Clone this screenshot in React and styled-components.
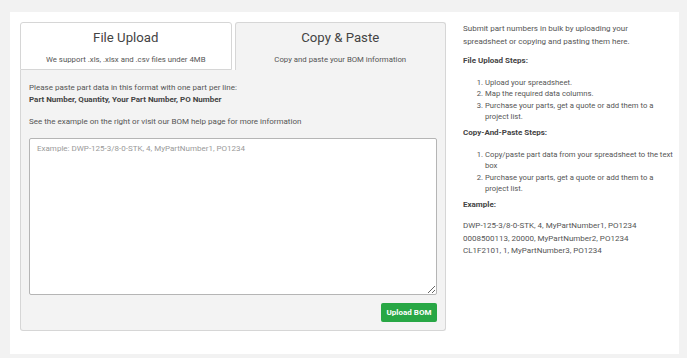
import React from "react";
import styled, { createGlobalStyle } from "styled-components";

const Global = createGlobalStyle`
  html, body { margin: 0; padding: 0; background: #f2f2f2; }
  body { font-family: Roboto, "Liberation Sans", sans-serif; color: #555; }
  * { box-sizing: border-box; }
`;

const Page = styled.div`
  padding: 12px 8px 4px 10px;
`;

const Card = styled.div`
  background: #fff;
  height: 342px;
  display: flex;
  gap: 17px;
  padding: 10px 6px 0 10px;
`;

const Left = styled.div`
  width: 426px;
  flex: none;
  display: flex;
  flex-direction: column;
`;

const Tabs = styled.div`
  display: flex;
  gap: 3px;
  height: 48px;
`;

const Tab = styled.div`
  flex: 1;
  text-align: center;
  border: 1px solid #d6d6d6;
  border-bottom: ${(p) => (p.$active ? "none" : "1px solid #d6d6d6")};
  border-radius: 3px 3px 0 0;
  background: ${(p) => (p.$active ? "#f3f3f3" : "#fff")};
  padding-top: 5px;
`;

const TabTitle = styled.div`
  font-size: 13.2px;
  color: #444;
  line-height: 20px;
`;

const TabSub = styled.div`
  font-size: 7.8px;
  color: #555;
  margin-top: 7px;
`;

const Body = styled.div`
  background: #f3f3f3;
  border: 1px solid #d6d6d6;
  border-top: none;
  border-radius: 0 0 3px 3px;
  height: 261px;
  padding: 12px 8px 0 8px;
  display: flex;
  flex-direction: column;
`;

const Text = styled.p`
  margin: 0;
  font-size: 8px;
  line-height: 12px;
  color: ${(p) => (p.$bold ? "#444" : "#555")};
  font-weight: ${(p) => (p.$bold ? 700 : 400)};
  margin-top: ${(p) => p.$mt || 0}px;
`;

const Area = styled.textarea`
  margin-top: 10px;
  height: 157px;
  flex: none;
  width: 100%;
  border: 1px solid #b5b5b5;
  border-radius: 2px;
  background: #fff;
  padding: 5px 7px;
  font-family: Roboto, "Liberation Sans", sans-serif;
  font-size: 8px;
  color: #555;
  resize: vertical;
  &::placeholder { color: #9a9a9a; }
`;

const Actions = styled.div`
  display: flex;
  justify-content: flex-end;
  margin-top: 8px;
`;

const Button = styled.button`
  background: #28a745;
  border: none;
  border-radius: 2px;
  color: #fff;
  font-family: Roboto, "Liberation Sans", sans-serif;
  font-weight: 700;
  font-size: 8px;
  height: 19px;
  width: 56px;
  padding: 0;
  white-space: nowrap;
`;

const Right = styled.div`
  width: 210px;
  flex: none;
`;

const Para = styled.p`
  margin: 0 0 ${(p) => p.$mb || 0}px 0;
  font-size: 8px;
  line-height: ${(p) => p.$lh || 12}px;
  color: ${(p) => (p.$bold ? "#444" : "#555")};
  font-weight: ${(p) => (p.$bold ? 700 : 400)};
`;

const List = styled.ol`
  margin: 0 0 ${(p) => p.$mb || 0}px 0;
  padding-left: 22px;
  font-size: 7.7px;
  line-height: 11.5px;
  color: #555;
`;

export default function App() {
  return (
    <>
      <Global />
      <Page>
        <Card>
          <Left>
            <Tabs>
              <Tab>
                <TabTitle>File Upload</TabTitle>
                <TabSub>We support .xls, .xlsx and .csv files under 4MB</TabSub>
              </Tab>
              <Tab $active>
                <TabTitle>Copy &amp; Paste</TabTitle>
                <TabSub>Copy and paste your BOM information</TabSub>
              </Tab>
            </Tabs>
            <Body>
              <Text>Please paste part data in this format with one part per line:</Text>
              <Text $bold>Part Number, Quantity, Your Part Number, PO Number</Text>
              <Text $mt={10}>See the example on the right or visit our BOM help page for more information</Text>
              <Area placeholder="Example: DWP-125-3/8-0-STK, 4, MyPartNumber1, PO1234" />
              <Actions>
                <Button>Upload BOM</Button>
              </Actions>
            </Body>
          </Left>
          <Right>
            <Para $lh={13} $mb={7}>
              Submit part numbers in bulk by uploading your spreadsheet or copying and pasting them here.
            </Para>
            <Para $bold $mb={9.5}>File Upload Steps:</Para>
            <List $mb={4.5}>
              <li>Upload your spreadsheet.</li>
              <li>Map the required data columns.</li>
              <li>Purchase your parts, get a quote or add them to a project list.</li>
            </List>
            <Para $bold $mb={9.5}>Copy-And-Paste Steps:</Para>
            <List $mb={4.5}>
              <li>Copy/paste part data from your spreadsheet to the text box</li>
              <li>Purchase your parts, get a quote or add them to a project list.</li>
            </List>
            <Para $bold $mb={9}>Example:</Para>
            <Para $lh={12.5}>
              DWP-125-3/8-0-STK, 4, MyPartNumber1, PO1234<br />
              0008500113, 20000, MyPartNumber2, PO1234<br />
              CL1F2101, 1, MyPartNumber3, PO1234
            </Para>
          </Right>
        </Card>
      </Page>
    </>
  );
}
